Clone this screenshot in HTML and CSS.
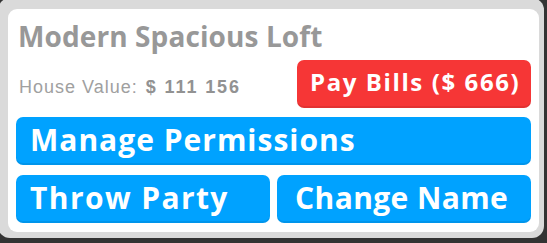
FILE: index.html
```html
<!DOCTYPE html>
<html lang="en">
<head>
  <meta charset="UTF-8" />
  <title>House Menu</title>
  <link rel="stylesheet" href="styles.css">
</head>
<body>

<!-- House panel -->
<div class="frame">
  <div class="panel">
    <h1 class="house-title">Modern Spacious Loft</h1>

    <div class="info-row">
      <p class="house-value">House Value: <strong>$ 111 156</strong></p>
      <button class="btn btn-red btn-pay">Pay Bills ($ 666)</button>
    </div>

    <button class="btn btn-blue btn-full">Manage Permissions</button>

    <div class="btn-grid">
      <button class="btn btn-blue btn-party">Throw Party</button>
      <button class="btn btn-blue btn-inset">Change Name</button>
    </div>
  </div>
</div>

</body>
</html>
```
FILE: styles.css
```css
body {
  margin: 0;
  background-color: #333;
  font-family: "Open Sans", sans-serif;
  overflow: hidden;
}

.frame {
  box-sizing: border-box;
  width: 546px;
  height: 240px;
  margin: -2px 0 0 -2px;
  padding: 11px 5px 6px 10px;
  background: #dadada;
  border-radius: 12px;
}

.panel {
  box-sizing: border-box;
  height: 223px;
  padding: 0 8px 9px;
  background: #fff;
  border-radius: 9px;
}

.house-title {
  margin: 0 0 10px;
  padding: 13px 0 0 2px;
  font-size: 28px;
  line-height: 28px;
  font-weight: 700;
  letter-spacing: 0.1px;
  color: #989898;
}

.info-row {
  display: flex;
  justify-content: space-between;
  align-items: center;
  height: 48px;
  margin-bottom: 9px;
}

.house-value {
  margin: 0;
  padding: 6px 0 0 3px;
  font-family: "Liberation Sans", Arial, sans-serif;
  font-size: 18px;
  line-height: 18px;
  letter-spacing: 1px;
  color: #a0a0a0;
}

.house-value strong {
  margin-left: 2px;
  color: #929292;
  letter-spacing: 1.9px;
}

/* buttons */
.btn {
  display: block;
  box-sizing: border-box;
  height: 48px;
  margin: 0;
  padding: 0 0 2px 14px;
  border: none;
  border-radius: 7px;
  font-family: "Open Sans", sans-serif;
  font-size: 30px;
  line-height: 46px;
  font-weight: 700;
  letter-spacing: 1px;
  color: #fff;
  text-align: left;
  white-space: nowrap;
  box-shadow: inset 0 -2px 0 rgba(0,0,0,0.08);
}

.btn-blue {
  background-color: #00a2ff;
}

.btn-red {
  background-color: #f63636;
}

.btn-pay {
  width: 234px;
  padding: 0 0 4px 13px;
  font-size: 24px;
  line-height: 44px;
  letter-spacing: 1.6px;
}

.btn-full {
  width: 100%;
  margin-bottom: 10px;
}

.btn-grid {
  display: grid;
  grid-template-columns: 1fr 1fr;
  gap: 7px;
}

.btn-party {
  letter-spacing: 1.4px;
}

.btn-inset {
  padding-left: 18px;
  letter-spacing: 0.4px;
}
```
